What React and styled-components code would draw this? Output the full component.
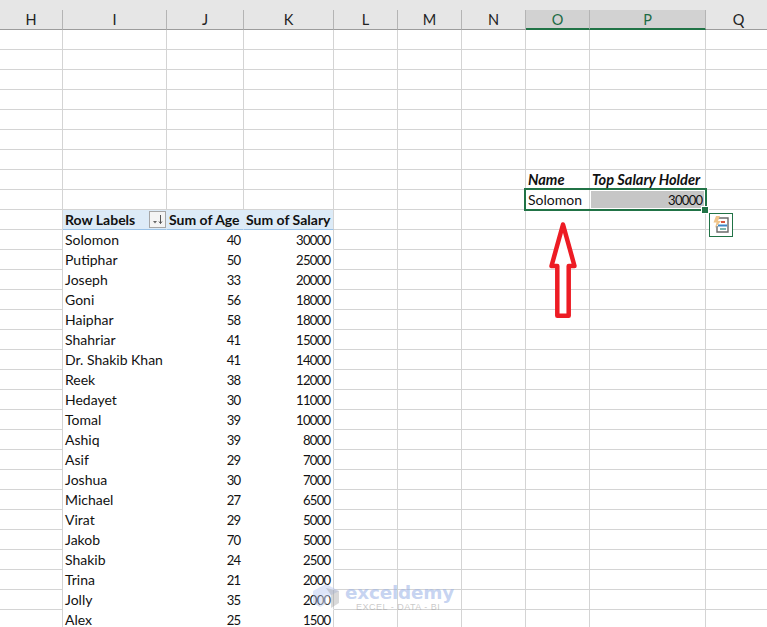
import React from "react";
import styled, { createGlobalStyle } from "styled-components";

const Global = createGlobalStyle`
  html, body { margin: 0; padding: 0; background: #fff; overflow: hidden; }
  body { font-family: "Lato", "Liberation Sans", sans-serif; }
`;

const COLS = [
  ["H", 63], ["I", 104], ["J", 77], ["K", 90], ["L", 64], ["M", 64], ["N", 64], ["O", 64], ["P", 116], ["Q", 66],
];
const template = COLS.map((c) => `${c[1]}px`).join(" ");

const Sheet = styled.div`
  position: relative;
  width: 767px;
  height: 627px;
  overflow: hidden;
  background: #fff;
  color: #111;
  font-size: 14px;
`;
const TopStrip = styled.div`
  height: 10px;
  background: #e6e6e6;
`;
const HeaderRow = styled.div`
  display: grid;
  grid-template-columns: ${template};
  height: 20px;
`;
const ColHead = styled.div`
  display: flex;
  align-items: center;
  justify-content: center;
  box-sizing: border-box;
  height: 20px;
  font-size: 14.5px;
  background: ${(p) => (p.$active ? "#d2d2d2" : "#e6e6e6")};
  color: ${(p) => (p.$active ? "#1d6b45" : "#222")};
  border-right: 1px solid #b4b4b4;
  border-bottom: ${(p) => (p.$active ? "2px solid #217346" : "1px solid #9c9c9c")};
`;
const Row = styled.div`
  display: grid;
  grid-template-columns: ${template};
  height: 20px;
`;
const Cell = styled.div`
  box-sizing: border-box;
  display: flex;
  align-items: center;
  justify-content: flex-start;
  padding: 0 2px;
  white-space: nowrap;
  background: ${(p) => p.$bg || "transparent"};
  font-weight: ${(p) => (p.$bold ? 700 : 400)};
  border-right: 1px solid ${(p) => (p.$noV ? "transparent" : "#d4d4d4")};
  border-bottom: 1px solid ${(p) => (p.$noH ? "transparent" : p.$line || "#d4d4d4")};
`;
const TitleCell = styled(Cell)`
  font-weight: 700;
  font-style: italic;
  font-size: 14.6px;
`;
const NumCell = styled(Cell)`
  justify-content: flex-end;
  font-size: 13.1px;
  letter-spacing: -0.7px;
  padding-right: 2.5px;
`;
const PickedCell = styled(NumCell)`
  background: #c6c6c6;
  box-shadow: inset 0 0 0 1px #fff;
`;
const SortButton = styled.span`
  margin-left: auto;
  margin-right: -2px;
  width: 17px;
  height: 17px;
  box-sizing: border-box;
  border: 1px solid #a6a6a6;
  background: #f4f4f4;
  display: flex;
  align-items: center;
  justify-content: center;
`;
const Selection = styled.div`
  position: absolute;
  left: 524px;
  top: 188px;
  width: 183px;
  height: 23px;
  box-sizing: border-box;
  border: 2px solid #217346;
  pointer-events: none;
`;
const Handle = styled.div`
  position: absolute;
  left: 701px;
  top: 206px;
  width: 6px;
  height: 6px;
  background: #217346;
  border: 1px solid #fff;
`;
const QuickButton = styled.div`
  position: absolute;
  left: 709px;
  top: 213px;
  width: 24px;
  height: 24px;
  box-sizing: border-box;
  border: 1px solid #217346;
  background: #fff;
  display: flex;
  align-items: center;
  justify-content: center;
`;
const ArrowMark = styled.svg`
  position: absolute;
  left: 548px;
  top: 220px;
`;
const Watermark = styled.div`
  position: absolute;
  left: 312px;
  top: 583px;
  display: flex;
  align-items: flex-start;
  gap: 5px;
  pointer-events: none;
`;
const WordStack = styled.div`
  display: flex;
  flex-direction: column;
`;
const Brand = styled.span`
  font-family: "DejaVu Sans", sans-serif;
  font-weight: 700;
  font-size: 18.4px;
  letter-spacing: -0.2px;
  color: rgba(150, 175, 230, 0.55);
  line-height: 19px;
`;
const Tag = styled.span`
  font-family: "Liberation Sans", sans-serif;
  font-size: 9px;
  line-height: 8px;
  letter-spacing: 0.5px;
  white-space: nowrap;
  color: rgba(165, 165, 165, 0.6);
  margin: 1px 0 0 11px;
`;

const DATA = [
  ["Solomon", 40, 30000], ["Putiphar", 50, 25000], ["Joseph", 33, 20000], ["Goni", 56, 18000],
  ["Haiphar", 58, 18000], ["Shahriar", 41, 15000], ["Dr. Shakib Khan", 41, 14000], ["Reek", 38, 12000],
  ["Hedayet", 30, 11000], ["Tomal", 39, 10000], ["Ashiq", 39, 8000], ["Asif", 29, 7000],
  ["Joshua", 30, 7000], ["Michael", 27, 6500], ["Virat", 29, 5000], ["Jakob", 70, 5000],
  ["Shakib", 24, 2500], ["Trina", 21, 2000], ["Jolly", 35, 2000], ["Alex", 25, 1500],
];

const Blank = ({ n = 1 }) => Array.from({ length: n }, (_, i) => <Cell key={i} />);

const SortIcon = () => (
  <svg width="13" height="13" viewBox="0 0 13 13">
    <path d="M2 8h4L4 10.5z" fill="#666" />
    <path d="M9.5 2v8.5M8 8.5l1.5 2 1.5-2" fill="none" stroke="#555" strokeWidth="1" />
  </svg>
);

const QuickIcon = () => (
  <svg width="18" height="18" viewBox="0 0 18 18">
    <path d="M6 2h10v14H5V10" fill="#fff" stroke="#6b6b6b" strokeWidth="1.4" />
    <path d="M4 0h4L6 5h3l-6 7 1.5-5.5H1.5z" fill="#f0c48a" />
    <path d="M9 5h4v2H9z" fill="#d9573f" />
    <path d="M6 8.5h9v2H6z" fill="#3d86c6" />
    <path d="M8 12h6v2H8z" fill="#7cb8ae" />
  </svg>
);

const Logo = () => (
  <svg width="28" height="28" viewBox="0 0 28 28">
    <path d="M14 1 27 8 14 15 1 8z" fill="rgba(170,190,240,0.4)" />
    <path d="M1 8 14 15v6L8 24 1 20z" fill="rgba(170,190,240,0.4)" />
    <path d="M14 5 27 8v12l-8 5V12z" fill="rgba(150,150,150,0.36)" />
    <path d="M8 13l6-3 5 3v14l-5-2-6-2z" fill="rgba(255,255,255,0.22)" />
  </svg>
);

export default function App() {
  const rows = [];
  for (let i = 0; i < 7; i++) rows.push(<Row key={`e${i}`}><Blank n={10} /></Row>);
  rows.push(
    <Row key="titles">
      <Blank n={7} />
      <TitleCell>Name</TitleCell>
      <TitleCell>Top Salary Holder</TitleCell>
      <Cell />
    </Row>
  );
  rows.push(
    <Row key="result">
      <Blank n={7} />
      <Cell>Solomon</Cell>
      <PickedCell>30000</PickedCell>
      <Cell />
    </Row>
  );
  rows.push(
    <Row key="pivot-head">
      <Cell />
      <Cell $bold $bg="#ddebf7" $noV $line="#9bc2e6">
        Row Labels
        <SortButton><SortIcon /></SortButton>
      </Cell>
      <Cell $bold $bg="#ddebf7" $noV $line="#9bc2e6">Sum of Age</Cell>
      <Cell $bold $bg="#ddebf7" $line="#9bc2e6">Sum of Salary</Cell>
      <Blank n={6} />
    </Row>
  );
  DATA.forEach((d) => {
    rows.push(
      <Row key={d[0]}>
        <Cell />
        <Cell $noV $noH>{d[0]}</Cell>
        <NumCell $noV $noH>{d[1]}</NumCell>
        <NumCell $noH>{d[2]}</NumCell>
        <Blank n={6} />
      </Row>
    );
  });

  return (
    <Sheet>
      <Global />
      <TopStrip />
      <HeaderRow>
        {COLS.map(([name]) => (
          <ColHead key={name} $active={name === "O" || name === "P"}>{name}</ColHead>
        ))}
      </HeaderRow>
      {rows}
      <Selection />
      <Handle />
      <QuickButton><QuickIcon /></QuickButton>
      <ArrowMark width="30" height="100" viewBox="0 0 30 100">
        <path
          d="M15 4.5 3.5 46h5.8v49.7h11.4V46h5.8z"
          fill="#fff"
          stroke="#ed1c24"
          strokeWidth="4.5"
          strokeLinejoin="round"
        />
      </ArrowMark>
      <Watermark>
        <Logo />
        <WordStack>
          <Brand>exceldemy</Brand>
          <Tag>EXCEL - DATA - BI</Tag>
        </WordStack>
      </Watermark>
    </Sheet>
  );
}
